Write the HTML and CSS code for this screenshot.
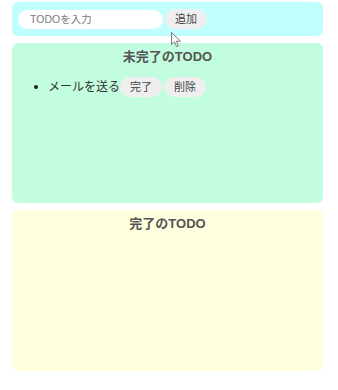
FILE: index.html
```html
<!DOCTYPE html>
<html lang="ja">
<head>
<meta charset="utf-8">
<link rel="stylesheet" href="styles.css">
</head>
<body>
<div class="page">
  <div class="input-area">
    <input class="todo-input" placeholder="TODOを入力">
    <button class="btn">追加</button>
  </div>
  <div class="area incomplete-area">
    <p class="title">未完了のTODO</p>
    <ul class="list">
      <li>
        <span class="row">
          <span class="item-text">メールを送る</span>
          <button class="btn">完了</button>
          <button class="btn btn-gap">削除</button>
        </span>
      </li>
    </ul>
  </div>
  <div class="area complete-area">
    <p class="title">完了のTODO</p>
  </div>
</div>
<svg class="cursor" width="11" height="16" viewBox="0 0 11 16">
  <path d="M0.5 0.5 L0.5 12.5 L3.5 9.8 L5.6 14.6 L7.4 13.8 L5.4 9.2 L9.5 9.2 Z" fill="#fff" stroke="#777" stroke-width="1" stroke-linejoin="round"/>
</svg>
</body>
</html>
```
FILE: styles.css
```css
html, body {
  margin: 0;
  padding: 0;
  background: #fff;
}
body {
  font-family: "Liberation Sans", "Noto Sans CJK JP", sans-serif;
  position: relative;
  width: 338px;
  height: 390px;
  overflow: hidden;
}
.page {
  padding: 2px 0 0 12px;
  width: 311px;
}
.input-area {
  background: #c1ffff;
  height: 34px;
  border-radius: 6px;
  display: flex;
  align-items: center;
  padding: 0 6px;
  box-sizing: border-box;
}
.todo-input {
  width: 145px;
  height: 19px;
  box-sizing: border-box;
  border: none;
  border-radius: 10px;
  background: #fff;
  padding: 0 12px;
  font-family: inherit;
  font-size: 10.5px;
  outline: none;
  margin: 0 2px 0 0;
}
.todo-input::placeholder {
  color: #7a7a7a;
}
.btn {
  border: none;
  background: #efefef;
  border-radius: 10px;
  height: 20px;
  width: 42px;
  padding: 0;
  font-family: inherit;
  font-size: 11px;
  color: #444;
  line-height: 20px;
}
.btn-gap {
  margin-left: 2px;
}
.area {
  margin-top: 7px;
  border-radius: 6px;
  padding-top: 5px;
  box-sizing: border-box;
}
.incomplete-area {
  background: #c3fde0;
  height: 160px;
}
.complete-area {
  background: #ffffe0;
  height: 161px;
}
.title {
  margin: 0;
  text-align: center;
  font-weight: bold;
  font-size: 13px;
  line-height: 17px;
  color: #555;
}
.list {
  margin: 12px 0 0;
  padding-left: 36px;
  list-style: disc;
  font-size: 12px;
  color: #222;
}
.row {
  display: inline-flex;
  align-items: center;
  vertical-align: middle;
}
.item-text {
  font-size: 12px;
  line-height: 20px;
  color: #333;
}
.cursor {
  position: absolute;
  left: 171px;
  top: 32px;
}
```
